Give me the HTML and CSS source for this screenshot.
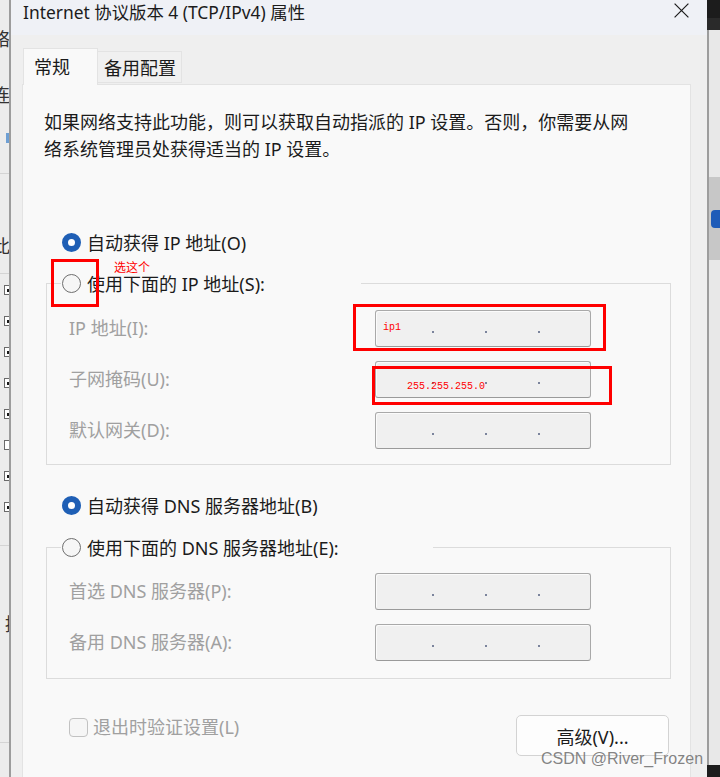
FILE: index.html
```html
<!DOCTYPE html>
<html lang="zh-CN">
<head>
<meta charset="utf-8">
<title>Internet 协议版本 4 (TCP/IPv4) 属性</title>
<link rel="stylesheet" href="styles.css">
</head>
<body>
<div class="screen">
  <aside class="bgwin-left">
    <span class="frag frag-a">络</span>
    <span class="frag frag-b">连</span>
    <span class="adapter"></span>
    <span class="hline hl-a"></span>
    <span class="frag frag-c">此</span>
    <span class="hline hl-b"></span>
    <div class="bg-list">
      <span class="bgcb on"></span>
      <span class="bgcb on"></span>
      <span class="bgcb on"></span>
      <span class="bgcb on"></span>
      <span class="bgcb on"></span>
      <span class="bgcb"></span>
      <span class="bgcb on"></span>
      <span class="bgcb on"></span>
    </div>
    <span class="hline hl-c"></span>
    <span class="frag frag-d">描</span>
    <span class="hline hl-d"></span>
  </aside>

  <div class="dialog">
    <header class="titlebar">
      <span class="title">Internet 协议版本 4 (TCP/IPv4) 属性</span>
      <svg class="close" width="15" height="15" viewBox="0 0 15 15" aria-label="关闭">
        <path d="M0.6 0.6 L14.4 14.4 M14.4 0.6 L0.6 14.4" stroke="#1b1b1b" stroke-width="1.2" fill="none"/>
      </svg>
    </header>

    <div class="body">
      <div class="tabs">
        <div class="tab tab-active">常规</div>
        <div class="tab tab-inactive">备用配置</div>
      </div>

      <div class="panel">
        <p class="desc">如果网络支持此功能，则可以获取自动指派的 IP 设置。否则，你需要从网<br>络系统管理员处获得适当的 IP 设置。</p>

        <div class="radio-row">
          <span class="radio checked"></span>
          <span class="radio-label">自动获得 IP 地址(O)</span>
        </div>

        <fieldset class="group group-ip">
          <legend class="legend legend-ip">
            <span class="radio"></span>
            <span class="radio-label">使用下面的 IP 地址(S):</span>
          </legend>
          <div class="fields">
            <span class="field-label">IP 地址(I):</span>
            <div class="ipbox">
              <span class="note note-ip">ip1</span>
              <span class="dot"></span><span class="dot"></span><span class="dot"></span>
            </div>
            <span class="field-label">子网掩码(U):</span>
            <div class="ipbox">
              <span class="note note-mask">255.255.255.0</span>
              <span class="dot"></span><span class="dot"></span><span class="dot"></span>
            </div>
            <span class="field-label">默认网关(D):</span>
            <div class="ipbox">
              <span class="dot"></span><span class="dot"></span><span class="dot"></span>
            </div>
          </div>
        </fieldset>

        <div class="radio-row radio-dns">
          <span class="radio checked"></span>
          <span class="radio-label">自动获得 DNS 服务器地址(B)</span>
        </div>

        <fieldset class="group group-dns">
          <legend class="legend legend-dns">
            <span class="radio"></span>
            <span class="radio-label">使用下面的 DNS 服务器地址(E):</span>
          </legend>
          <div class="fields">
            <span class="field-label">首选 DNS 服务器(P):</span>
            <div class="ipbox">
              <span class="dot"></span><span class="dot"></span><span class="dot"></span>
            </div>
            <span class="field-label">备用 DNS 服务器(A):</span>
            <div class="ipbox">
              <span class="dot"></span><span class="dot"></span><span class="dot"></span>
            </div>
          </div>
        </fieldset>

        <div class="actions">
          <label class="check-row">
            <span class="checkbox"></span>
            <span class="check-label">退出时验证设置(L)</span>
          </label>
          <button class="btn" type="button">高级(V)...</button>
        </div>
      </div>
    </div>
  </div>

  <aside class="bgwin-right">
    <div class="rs-top1"></div>
    <div class="rs-top2"></div>
    <div class="rs-main">
      <div class="rs-space"></div>
      <div class="rs-block"><span class="rs-badge"></span></div>
    </div>
    <div class="rs-bottom"></div>
  </aside>

  <span class="mark mark-radio"></span>
  <span class="mark-text">选这个</span>
  <span class="mark mark-ip"></span>
  <span class="mark mark-mask"></span>
  <span class="watermark">CSDN @River_Frozen</span>
</div>
</body>
</html>
```

FILE: styles.css
```css
* { box-sizing: border-box; }

html, body {
  margin: 0;
  padding: 0;
}

body {
  width: 720px;
  height: 777px;
  overflow: hidden;
  background: #efefef;
  font-family: "Noto Sans", "Noto Sans CJK SC", sans-serif;
  color: #1b1b1b;
}

.screen {
  position: relative;
  display: flex;
  width: 720px;
  height: 777px;
  overflow: hidden;
}

/* ---------- background window, left strip ---------- */
.bgwin-left {
  flex: none;
  width: 11px;
  background: #ececec;
  border-right: 2px solid #9c9c9c;
  display: flex;
  flex-direction: column;
  overflow: hidden;
}

.frag {
  display: block;
  flex: none;
  height: 20px;
  line-height: 20px;
  font-family: "Noto Sans CJK SC", sans-serif;
  font-size: 18px;
  color: #333;
  white-space: nowrap;
  margin-left: -8px;
}
.frag-a { margin-top: 28px; }
.frag-b { margin-top: 36px; }
.frag-c { margin-top: 61px; }
.frag-d { margin-top: 67px; margin-left: 5px; }

.adapter {
  display: block;
  flex: none;
  margin-top: 29px;
  margin-left: 6px;
  width: 4px;
  height: 10px;
  background: #6e9fd3;
}

.hline {
  display: block;
  flex: none;
  height: 1px;
  background: #d4d4d4;
}
.hl-a { margin-top: 30px; }
.hl-b { margin-top: 18px; }
.hl-c { margin-top: 33px; }
.hl-d { margin-top: 109px; }

.bg-list {
  flex: none;
  margin-top: 11px;
  display: flex;
  flex-direction: column;
  gap: 21px;
}

.bgcb {
  display: block;
  position: relative;
  margin-left: 4px;
  width: 10px;
  height: 10px;
  border: 1px solid #6a6a6a;
  background: #fff;
}
.bgcb.on::after {
  content: "";
  position: absolute;
  left: 2px;
  top: 3px;
  width: 3px;
  height: 3px;
  background: #1b1b1b;
}

/* ---------- dialog ---------- */
.dialog {
  flex: none;
  width: 696px;
  display: flex;
  flex-direction: column;
  background: #efefef;
}

.titlebar {
  flex: none;
  height: 35px;
  background: #eff1f6;
  display: flex;
  justify-content: space-between;
  align-items: flex-start;
  padding-left: 12px;
}

.title {
  font-size: 17.4px;
  line-height: 24px;
  color: #1b1b1b;
  white-space: nowrap;
}

.close {
  flex: none;
  margin: 3px 18px 0 0;
}

.body {
  flex: 1;
  display: flex;
  flex-direction: column;
  padding: 13px 16px 0 11px;
}

.tabs {
  flex: none;
  display: flex;
  align-items: flex-end;
  height: 36px;
  padding-left: 1px;
  position: relative;
  z-index: 1;
}

.tab {
  font-family: "Noto Sans CJK SC", sans-serif;
  font-size: 18px;
  line-height: 26px;
  white-space: nowrap;
  border: 1px solid #e3e3e3;
}

.tab-active {
  width: 75px;
  height: 37px;
  margin-bottom: -1px;
  padding: 4px 0 0 10px;
  background: #f9f9f9;
  border-bottom: none;
}

.tab-inactive {
  width: 84px;
  height: 32px;
  margin-bottom: 1px;
  padding: 2px 0 0 6px;
  background: #f0f0f0;
  border-left: none;
}

.panel {
  flex: 1;
  background: #f9f9f9;
  border: 1px solid #e3e3e3;
  border-bottom: none;
  padding: 24px 0 0 21px;
}

.desc {
  margin: 0;
  font-size: 18px;
  line-height: 27px;
  white-space: nowrap;
}

.radio-row {
  display: flex;
  align-items: center;
  height: 27px;
  margin-top: 66px;
  padding-left: 18px;
}

.radio-dns {
  margin-top: 27px;
}

.radio {
  flex: none;
  width: 19px;
  height: 19px;
  border-radius: 50%;
  border: 1px solid #6f6f6f;
  background: #f6f6f6;
}

.radio.checked {
  border: 6px solid #1f5fb5;
  background: #ffffff;
}

.radio-label {
  margin-left: 6px;
  font-size: 18px;
  line-height: 20px;
  white-space: nowrap;
}

.group {
  width: 625px;
  min-width: 0;
  margin: 14px 0 0 2px;
  border: 1px solid #dcdcdc;
  padding: 13px 0 15px 14px;
}

.group-dns {
  margin-top: 15px;
  padding-bottom: 17px;
  padding-top: 12px;
}

.legend {
  display: flex;
  align-items: center;
  height: 27px;
  padding: 0 0 0 1px;
}

.legend-ip { width: 300px; }
.legend-dns { width: 372px; }

.fields {
  display: grid;
  grid-template-columns: 306px 216px;
  grid-auto-rows: 37px;
  row-gap: 14px;
  align-items: center;
  padding-left: 8px;
}

.field-label {
  font-size: 18px;
  line-height: 27px;
  color: #a0a0a0;
  white-space: nowrap;
}

.ipbox {
  position: relative;
  height: 37px;
  display: flex;
  align-items: flex-start;
  gap: 51px;
  padding: 20px 0 0 56px;
  background: #f0f0f0;
  border: 1px solid #a9a9a9;
  border-bottom-color: #9a9a9a;
  border-radius: 3px;
  box-shadow: inset 1px 1px 0 #fbfbfb;
}

.dot {
  width: 2px;
  height: 2px;
  background: #7b849c;
}

.note {
  position: absolute;
  font-family: "Liberation Mono", monospace;
  font-size: 10px;
  line-height: 12px;
  color: #ff0000;
  white-space: nowrap;
}
.note-ip { left: 7px; top: 11px; }
.note-mask { left: 31px; top: 19px; }

.actions {
  width: 625px;
  margin: 35px 0 0 2px;
  padding: 0 2px 0 23px;
  display: flex;
  justify-content: space-between;
  align-items: flex-start;
}

.check-row {
  display: flex;
  align-items: center;
  height: 27px;
}

.checkbox {
  width: 19px;
  height: 19px;
  border: 1px solid #c2c2c2;
  border-radius: 4px;
  background: #f6f6f6;
}

.check-label {
  margin-left: 5px;
  font-size: 18px;
  line-height: 27px;
  color: #a0a0a0;
  white-space: nowrap;
}

.btn {
  width: 153px;
  height: 41px;
  margin-top: 1px;
  padding: 0;
  font-family: "Noto Sans", "Noto Sans CJK SC", sans-serif;
  font-size: 18px;
  color: #1b1b1b;
  background: #fdfdfd;
  border: 1px solid #d3d3d3;
  border-radius: 5px;
}

/* ---------- background window, right strip ---------- */
.bgwin-right {
  flex: none;
  width: 13px;
  display: flex;
  flex-direction: column;
}

.rs-top1 { flex: none; height: 18px; background: #1c1c1c; }
.rs-top2 { flex: none; height: 12px; background: #2a2a2a; }

.rs-main {
  flex: 1;
  display: flex;
  flex-direction: column;
  background: #e8e8e8;
  border-left: 2px solid #9d9d9d;
}

.rs-space { flex: none; height: 147px; }

.rs-block {
  flex: none;
  height: 83px;
  padding-top: 33px;
  background: #c7c7c7;
}

.rs-badge {
  display: block;
  margin-left: 2px;
  height: 18px;
  background: #1e5bb8;
  border-radius: 4px 0 0 4px;
}

.rs-bottom { flex: none; height: 12px; background: #1c1c1c; }

/* ---------- red annotations (overlay) ---------- */
.mark {
  position: absolute;
  border: 3px solid #ff0000;
}
.mark-radio { left: 51px; top: 259px; width: 48px; height: 48px; }
.mark-ip { left: 353px; top: 304px; width: 253px; height: 47px; }
.mark-mask { left: 372px; top: 366px; width: 240px; height: 39px; }

.mark-text {
  position: absolute;
  left: 114px;
  top: 261px;
  font-family: "Noto Sans CJK SC", sans-serif;
  font-size: 12px;
  line-height: 12px;
  color: #ff0000;
}

.watermark {
  position: absolute;
  left: 541px;
  top: 750px;
  font-family: "Liberation Sans", "Noto Sans CJK SC", sans-serif;
  font-size: 16px;
  line-height: 18px;
  color: rgba(110, 110, 110, 0.85);
  white-space: nowrap;
}
```
